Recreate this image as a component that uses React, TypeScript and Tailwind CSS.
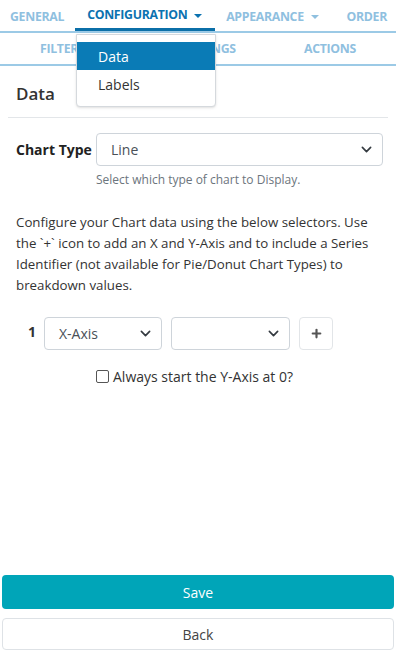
import { Plus } from "lucide-react";

function Caret() {
  return <span className="ml-[7px] inline-block h-0 w-0 border-x-[4px] border-t-[4px] border-x-transparent border-t-current align-middle" />;
}

function Chevron() {
  return (
    <svg width="11" height="11" viewBox="0 0 16 16" className="text-[#343a40]">
      <path d="M2 5l6 6 6-6" fill="none" stroke="currentColor" strokeWidth="2.4" strokeLinecap="round" strokeLinejoin="round" />
    </svg>
  );
}

function Select({ value, className }: { value: string; className: string }) {
  return (
    <div className={`flex shrink-0 items-center justify-between rounded-[4px] border border-[#ced4da] bg-white pl-[14px] pr-[10px] text-[14px] text-[#495057] ${className}`}>
      <span>{value}</span>
      <Chevron />
    </div>
  );
}

export default function App() {
  const tab = "text-[12.3px] font-bold uppercase tracking-[-0.3px] whitespace-nowrap";
  return (
    <div className="relative flex h-[654px] w-[396px] flex-col bg-white font-['Open_Sans',sans-serif] text-[#212529]">
      {/* tab row 1 */}
      <div className="flex h-[33px] items-center border-b-2 border-[#9ccae6] pt-[3px] text-[#8fc0df]">
        <span className={`${tab} ml-[10px]`}>General</span>
        <span className={`${tab} relative ml-[11px] flex h-full w-[140px] items-center border-b-[3px] border-[#0b6fa8] pl-[12px] text-[#0b72b0]`}>
          Configuration
          <Caret />
        </span>
        <span className={`${tab} ml-[11px] flex items-center`}>
          Appearance
          <Caret />
        </span>
        <span className={`${tab} ml-auto mr-[9px]`}>Order</span>
      </div>
      {/* tab row 2 */}
      <div className="flex h-[33px] items-center border-b-2 border-[#9ccae6] pt-[1px] text-[#8fc0df]">
        <span className={`${tab} ml-[40px]`}>Filters</span>
        <span className={`${tab} ml-[96px]`}>Settings</span>
        <span className={`${tab} ml-auto mr-[40px]`}>Actions</span>
      </div>

      {/* dropdown menu */}
      <div className="absolute left-[76px] top-[34px] w-[140px] rounded-b-[4px] border border-[#d5d9dd] bg-white py-[7px] text-[14px] shadow-sm">
        <div className="flex h-[28px] items-center bg-[#0a7bb6] pl-[21px] text-white">Data</div>
        <div className="flex h-[29px] items-center pl-[21px] text-[#333]">Labels</div>
      </div>

      <div className="px-[16px] pt-[15px] text-[17px] font-semibold text-[#333]">Data</div>
      <div className="mx-[8px] mt-[10px] border-t border-[#e3e6e9]" />

      <div className="mt-[15px] flex px-[16px]">
        <span className="w-[80px] shrink-0 pt-[6px] text-[14px] font-bold text-[#222]">Chart Type</span>
        <div className="flex-1">
          <Select value="Line" className="h-[33px] w-[287px]" />
          <div className="mt-[5px] text-[12px] text-[#6c757d]">Select which type of chart to Display.</div>
        </div>
      </div>

      <p className="mt-[23px] px-[16px] text-[13.3px] leading-[21px] text-[#333]">
        Configure your Chart data using the below selectors. Use the `+` icon to add an X and Y-Axis and to include a Series Identifier (not
        available for Pie/Donut Chart Types) to breakdown values.
      </p>

      <div className="mt-[21px] flex items-start">
        <span className="ml-[28px] w-[16px] pt-[4px] text-[14px] font-bold text-[#333]">1</span>
        <Select value="X-Axis" className="h-[33px] w-[118px]" />
        <Select value="" className="ml-[9px] h-[33px] w-[119px]" />
        <button className="ml-[9px] flex h-[33px] w-[34px] items-center justify-center rounded-[4px] border border-[#e2e5e8] bg-white">
          <Plus size={13} strokeWidth={4} className="text-[#555]" />
        </button>
      </div>

      <label className="mt-[16px] flex items-center pl-[96px] text-[14px] text-[#333]">
        <span className="mr-[4px] h-[13px] w-[13px] rounded-[2px] border border-[#555] bg-white" />
        Always start the Y-Axis at 0?
      </label>

      <div className="mt-auto flex flex-col gap-[9px] px-[2px] pb-[4px]">
        <button className="h-[34px] rounded-[4px] bg-[#00a5b8] text-[14px] text-white">Save</button>
        <button className="h-[32px] rounded-[4px] border border-[#dee2e6] bg-white text-[14px] text-[#444]">Back</button>
      </div>
    </div>
  );
}
